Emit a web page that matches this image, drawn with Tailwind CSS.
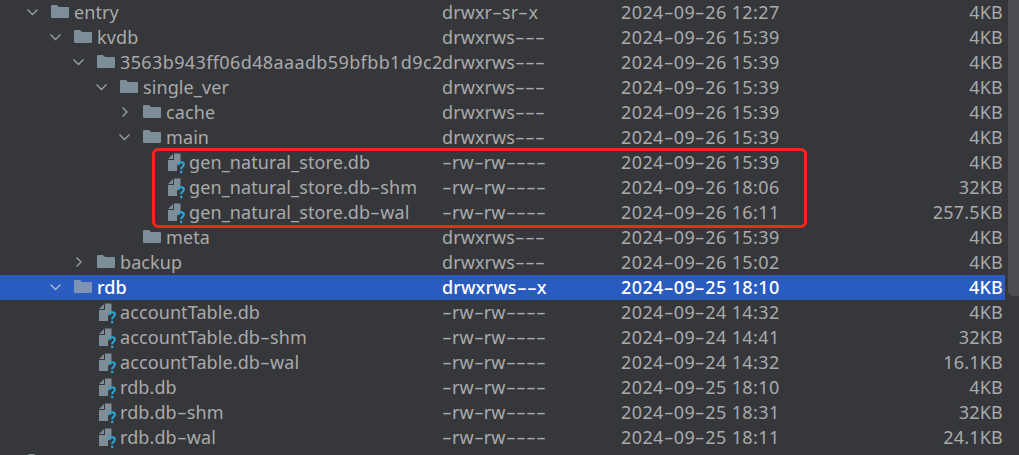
<!DOCTYPE html>
<html><head><script src="https://cdn.jsdelivr.net/npm/@tailwindcss/browser@4"></script></head>
<body class="w-[1019px] h-[455px] overflow-hidden bg-[#36373a] font-['Noto_Sans',sans-serif] text-[18px] leading-[25px] text-[#a9aaab]">
<div class="relative w-[1019px] h-[455px] overflow-hidden">
  <div id="tree" class="flex flex-col w-[1005px]"></div>
  <div class="absolute top-0 right-0 w-[11px] h-[296px] bg-[#4c4d50] rounded-bl-[5px]"></div>
  <div class="absolute left-[152px] top-[148px] w-[655px] h-[80px] border-[3px] border-[#f2281c] rounded-[6px]"></div>
</div>
<script>
const rows=[
[0,'d','v','entry','drwxr-sr-x','2024-09-26 12:27','4KB'],
[1,'d','v','kvdb','drwxrws---','2024-09-26 15:39','4KB'],
[2,'d','v','3563b943ff06d48aaadb59bfbb1d9c2','drwxrws---','2024-09-26 15:39','4KB',0,1],
[3,'d','v','single_ver','drwxrws---','2024-09-26 15:39','4KB'],
[4,'d','>','cache','drwxrws---','2024-09-26 15:39','4KB'],
[4,'d','v','main','drwxrws---','2024-09-26 15:39','4KB'],
[5,'f','','gen_natural_store.db','-rw-rw----','2024-09-26 15:39','4KB'],
[5,'f','','gen_natural_store.db-shm','-rw-rw----','2024-09-26 18:06','32KB'],
[5,'f','','gen_natural_store.db-wal','-rw-rw----','2024-09-26 16:11','257.5KB'],
[4,'d','','meta','drwxrws---','2024-09-26 15:39','4KB'],
[2,'d','>','backup','drwxrws---','2024-09-26 15:02','4KB'],
[1,'d','v','rdb','drwxrws--x','2024-09-25 18:10','4KB',1],
[2,'f','','accountTable.db','-rw-rw----','2024-09-24 14:32','4KB'],
[2,'f','','accountTable.db-shm','-rw-rw----','2024-09-24 14:41','32KB'],
[2,'f','','accountTable.db-wal','-rw-rw----','2024-09-24 14:32','16.1KB'],
[2,'f','','rdb.db','-rw-rw----','2024-09-25 18:10','4KB'],
[2,'f','','rdb.db-shm','-rw-rw----','2024-09-25 18:31','32KB'],
[2,'f','','rdb.db-wal','-rw-rw----','2024-09-25 18:11','24.1KB'],
];
const pad=['pl-[21px]','pl-[44px]','pl-[67px]','pl-[90px]','pl-[113px]','pl-[136px]'];
const hy=s=>s.replace(/-/g,'<span class="inline-block w-[10px] scale-x-[1.7] text-center">-</span>');
const chev={v:'<polyline points="2.5,4.500 7.5,9.500 12.500,4.500"/>','>':'<polyline points="5.500,2.500 10,7 5.500,11.500"/>'};
const chevron=(c,sel)=>c?`<svg class="w-[15px] h-[14px] ml-[4px] mr-[4px] -mt-[1px] shrink-0 fill-none ${sel?'stroke-[#a9b9d9]':'stroke-[#9b9ea1]'} stroke-[1.4]" viewBox="0 0 15 14">${chev[c]}</svg>`:'<div class="w-[23px] shrink-0"></div>';
const folder=sel=>`<svg class="w-[18px] h-[13px] ml-[7px] mr-[5px] -mt-[2px] shrink-0 ${sel?'fill-[#7f93b4]':'fill-[#7e8e99]'}" viewBox="0 0 18 13"><path d="M0 1Q0 0 1 0H6L8 2H17Q18 2 18 3V12Q18 13 17 13H1Q0 13 0 12Z"/></svg>`;
const file=`<svg class="w-[19px] h-[22px] ml-[9px] mr-[2px] shrink-0 overflow-visible" viewBox="0 0 19 22"><path class="fill-[#7e8e99]" d="M0 7L5 2V7ZM6 1.500H12.500V10.500Q9.500 11 9 15V19H0V8H6Z"/><path class="fill-none stroke-[#29a7dc] stroke-[2.1]" d="M10.500 12.800Q11 10.300 13.300 10.300Q15.800 10.300 15.800 12.500Q15.800 14 14.300 15Q13.200 15.800 13.200 17.300"/><rect class="fill-[#29a7dc]" x="12.100" y="18.800" width="2.200" height="2.400"/></svg>`;
document.getElementById('tree').innerHTML=rows.map(r=>{const sel=r[7];
return `<div class="flex items-center h-[25px] shrink-0 ${sel?'bg-[#2a5bbf] text-white font-medium':''}">
<div class="flex items-center w-[442px] shrink-0 overflow-hidden whitespace-nowrap ${pad[r[0]]}">${chevron(r[2],sel)}${r[1]=='d'?folder(sel):file}<span class="${r[8]?'tracking-[0.38px]':'tracking-[0.1px]'}">${hy(r[3])}</span></div>
<div class="w-[179px] shrink-0 tracking-[0.1px] whitespace-nowrap">${hy(r[4])}</div>
<div class="w-[250px] shrink-0 tracking-[0.4px] whitespace-nowrap">${hy(r[5])}</div>
<div class="flex-1 text-right pr-[2px] tracking-[0.2px]">${r[6]}</div></div>`}).join('')+
`<div class="flex h-[5px] pl-[21px] pt-[6px]">${folder(0)}</div>`;
</script>
</body></html>
